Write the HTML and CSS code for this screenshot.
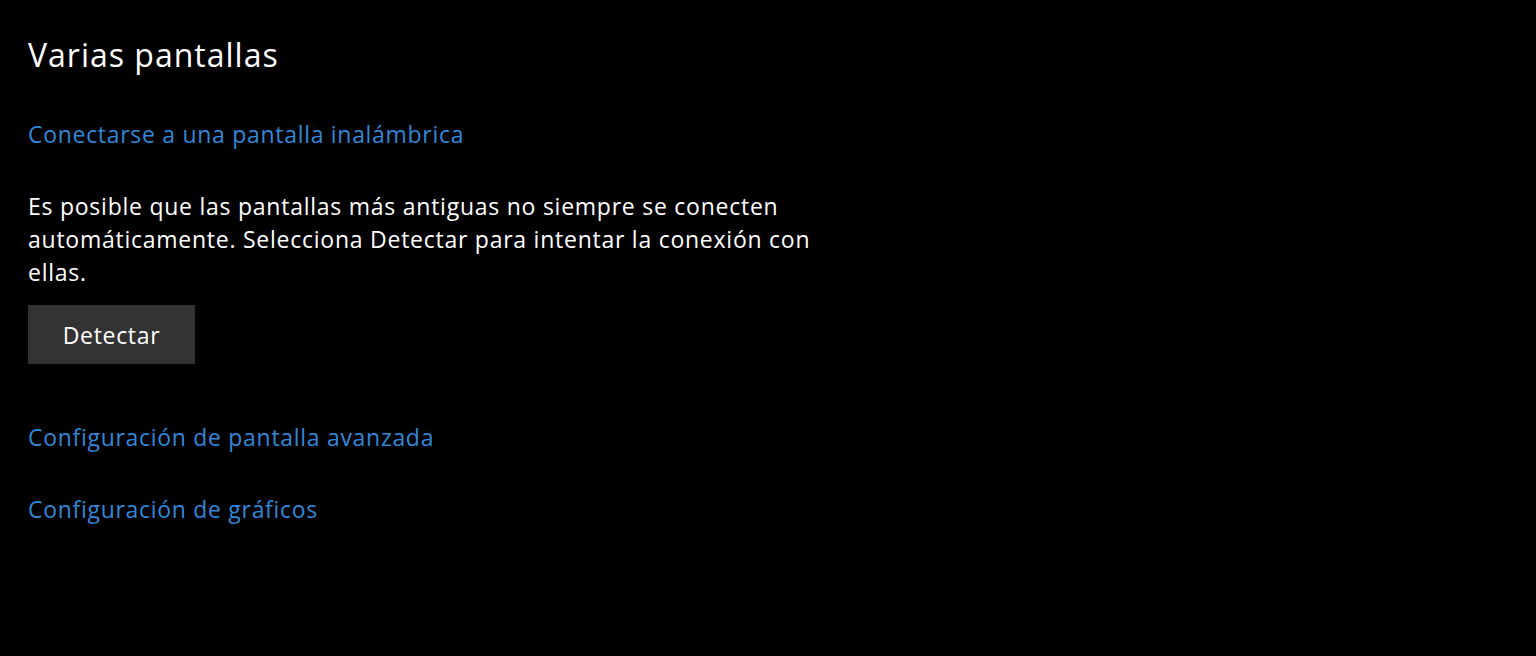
FILE: index.html
```html
<!DOCTYPE html>
<html lang="es">
<head>
<meta charset="utf-8">
<title>Varias pantallas</title>
<link rel="stylesheet" href="styles.css">
</head>
<body>
<main class="page">
  <h1 class="title">Varias pantallas</h1>
  <a class="link link-first" href="#">Conectarse a una pantalla inalámbrica</a>
  <p class="desc">Es posible que las pantallas más antiguas no siempre se conecten automáticamente. Selecciona Detectar para intentar la conexión con ellas.</p>
  <button class="btn" type="button">Detectar</button>
  <a class="link link-adv" href="#">Configuración de pantalla avanzada</a>
  <a class="link link-gfx" href="#">Configuración de gráficos</a>
</main>
</body>
</html>
```
FILE: styles.css
```css
html, body {
  margin: 0;
  padding: 0;
  background: #000;
  height: 100%;
}
body {
  font-family: "Open Sans", "Noto Sans", "Liberation Sans", sans-serif;
  color: #fff;
}
.page {
  display: flex;
  flex-direction: column;
  align-items: flex-start;
  padding: 33px 0 0 28px;
}
.title {
  margin: 0;
  font-size: 32px;
  font-weight: 400;
  line-height: 44px;
  letter-spacing: 1px;
}
.link {
  color: #3287d8;
  text-decoration: none;
  font-size: 23px;
  line-height: 32px;
  letter-spacing: 0.7px;
}
.link-first {
  margin-top: 41px;
}
.desc {
  margin: 40px 0 0 0;
  width: 820px;
  font-size: 23px;
  line-height: 33px;
  letter-spacing: 0.75px;
  color: #fff;
}
.btn {
  margin-top: 16px;
  width: 167px;
  height: 59px;
  background: #333;
  border: none;
  color: #fff;
  font-family: inherit;
  font-size: 23px;
  letter-spacing: 0.7px;
  padding: 0;
}
.link-adv {
  margin-top: 57px;
}
.link-gfx {
  margin-top: 40px;
}
```
